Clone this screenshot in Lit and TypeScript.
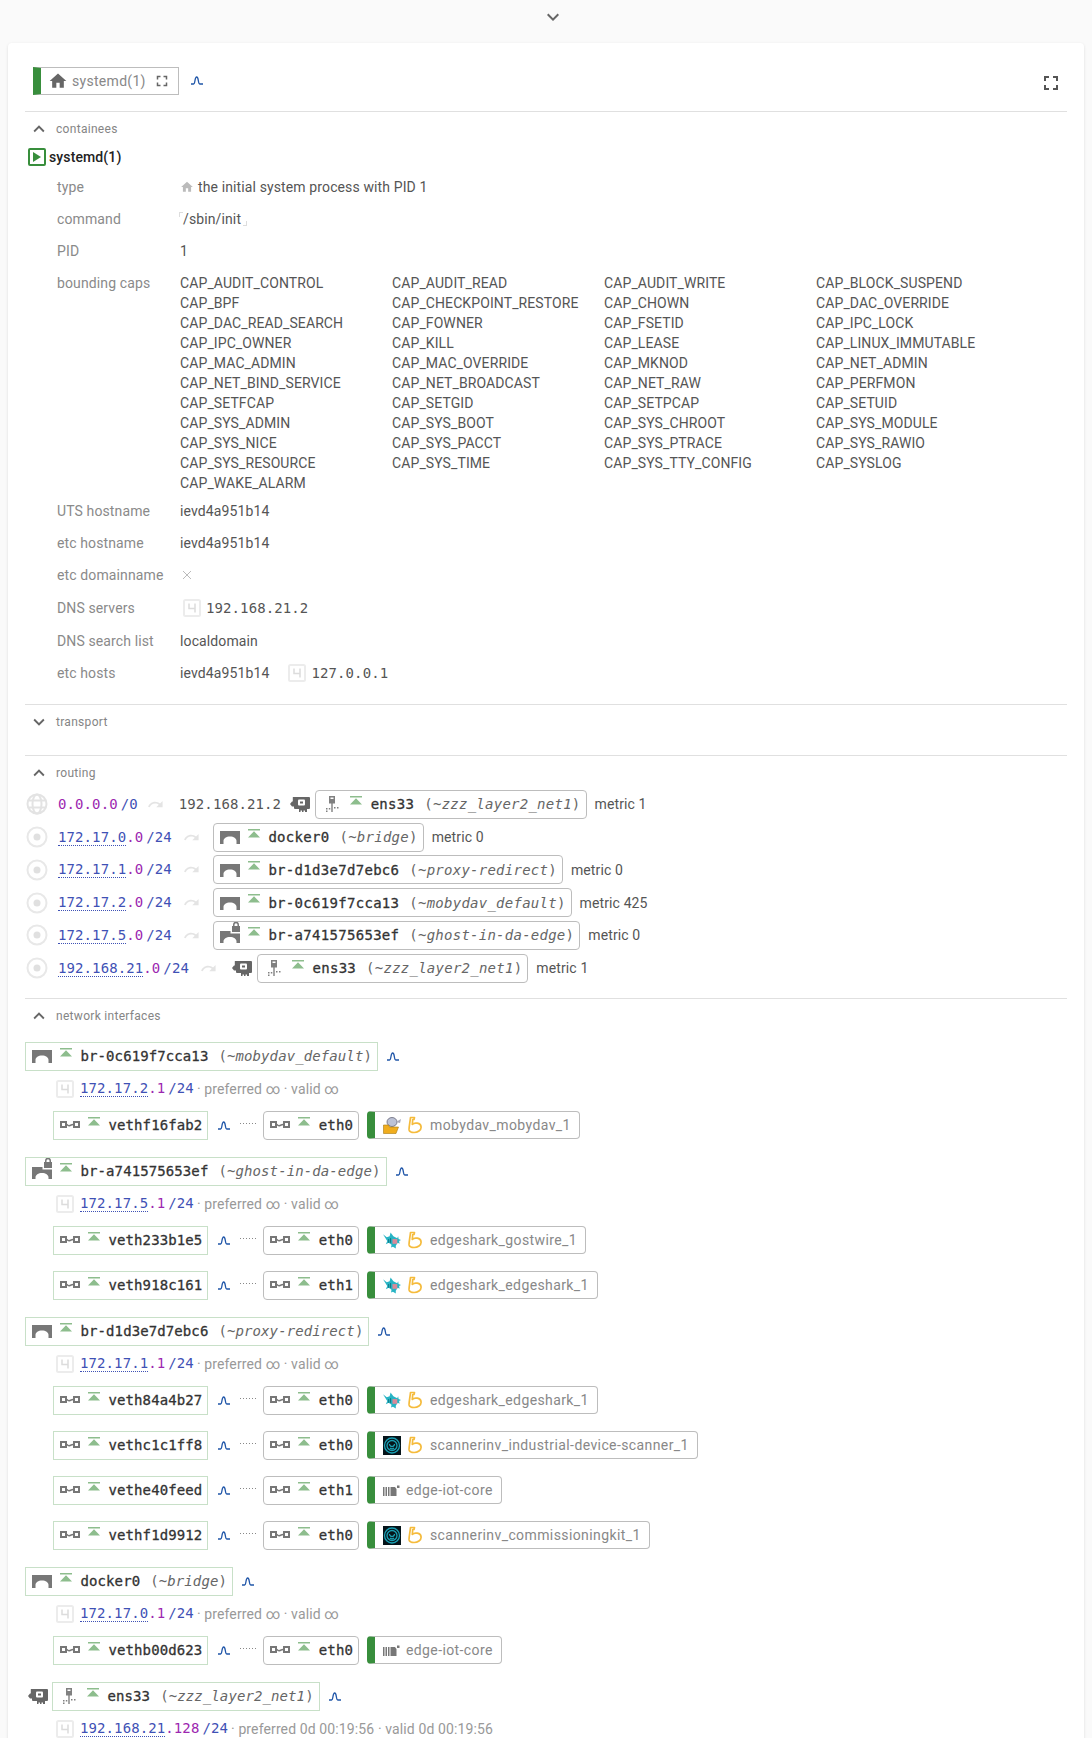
import { LitElement, html, css, TemplateResult } from "lit";
import { customElement } from "lit/decorators.js";

const mi = (d: string, size: number, cls = "") =>
  html`<svg class=${cls} width=${size} height=${size} viewBox="0 0 24 24"><path fill="currentColor" d=${d}></path></svg>`;
const HOME = "M10 20v-6h4v6h5v-8h3L12 3 2 12h3v8z";
const FULL = "M7 14H5v5h5v-2H7v-3zm-2-4h2V7h3V5H5v5zm12 7h-3v2h5v-5h-2v3zM14 5v2h3v3h2V5h-5z";
const UP = "M12 8l-6 6 1.41 1.41L12 10.83l4.59 4.58L18 14z";
const DOWN = "M16.59 8.59L12 13.17 7.41 8.59 6 10l6 6 6-6z";
const REDO = "M18.4 10.6C16.55 8.99 14.15 8 11.5 8c-4.65 0-8.58 3.03-9.96 7.22L3.9 16c1.05-3.19 4.05-5.5 7.6-5.5 1.95 0 3.73.72 5.12 1.88L13 16h9V7l-3.6 3.6z";

const wave = () => html`<svg class="wave" width="12" height="9" viewBox="0 0 12 9"><path d="M0 8h2.600c.8 0 1-1 1.300-3 .3-2 .6-4 1.800-4s1.400 2 1.700 4c.3 2 .5 3 1.300 3H12" fill="none" stroke="#1f55a8" stroke-width="1.300"></path></svg>`;
const upIcon = () => html`<svg class="upi" width="12" height="9" viewBox="0 0 12 9"><path fill="#8dbd8d" d="M0 0h12v1.600H0zM6 2.200l6 6.300H0z"></path></svg>`;
const bridge = () => html`<svg class="ic" width="20" height="14" viewBox="0 0 20 14"><path fill="#777" d="M0 1h20v13h-3.500v-3c0-2.500-2.800-4.500-6.500-4.500S3.500 8.500 3.500 11v3H0z"></path></svg>`;
const lockBridge = () => html`<svg class="ic lock" width="20" height="21" viewBox="0 0 20 21"><path fill="#777" d="M0 9h10.500v2.500H20V21h-3.500v-1.500c0-2.500-2.800-4.500-6.500-4.500s-6.500 2-6.500 4.500V21H0z"></path><path fill="#777" d="M13 4v-1.300a3 3 0 0 1 6 0V4h1v6h-8V4zm1.500 0h3v-1.300a1.500 1.500 0 0 0-3 0z"></path></svg>`;
const vethIcon = () => html`<svg class="ic" width="20" height="8" viewBox="0 0 20 8"><g fill="none" stroke="#777" stroke-width="2"><rect x="1" y="1" width="5" height="5"></rect><rect x="14" y="1" width="5" height="5"></rect><path stroke-width="1.400" d="M6.500 3.500c1.500 0 1.500 2 3.500 1s2-1 3.500-1"></path></g></svg>`;
const ethIcon = () => html`<svg class="ic" width="20" height="16" viewBox="0 0 20 16"><g fill="#808080"><path d="M7 0h6v7.500h-2.300V16H9.300V7.500H7zm1.500 1.500v1.500h3V1.500z"></path><rect x="4" y="12" width="1.500" height="1.500"></rect><rect x="6.800" y="12" width="1.500" height="1.500"></rect><rect x="4" y="14.500" width="1.500" height="1.500"></rect><rect x="12" y="11" width="1.500" height="1.500"></rect><rect x="15" y="11" width="1.500" height="1.500"></rect></g></svg>`;
const nicIcon = () => html`<svg class="nic" width="20" height="16" viewBox="0 0 20 16"><path fill="#666" d="M3 1h16a1 1 0 0 1 1 1v10a1 1 0 0 1-1 1h-2v3h-2v-1.500h-1.500V16H12v-1.500h-1.500V16H9v-3H5a1 1 0 0 1-1-1v-1.500H2l-2-2.500 2-2.500h0.800V2a1 1 0 0 1 .2-1z"></path><rect x="8" y="3.500" width="7" height="6" rx="1" fill="#fff"></rect><rect x="10" y="5.500" width="3" height="2" fill="#666"></rect></svg>`;
const four = () => html`<svg class="four" width="18" height="18" viewBox="0 0 18 18"><rect x="1" y="1" width="16" height="16" rx="1.500" fill="none" stroke="#ececec" stroke-width="2"></rect><path d="M6 4.500v5h6M12 4.500v9" fill="none" stroke="#dcdcdc" stroke-width="1.500"></path></svg>`;
const globe = () => html`<svg class="rt" width="22" height="22" viewBox="0 0 22 22"><g fill="none" stroke="#e3e3e3" stroke-width="2"><circle cx="11" cy="11" r="9.500"></circle><ellipse cx="11" cy="11" rx="4.500" ry="9.500"></ellipse><path d="M2 7.500h18M2 14.500h18"></path></g></svg>`;
const target = () => html`<svg class="rt" width="22" height="22" viewBox="0 0 22 22"><circle cx="11" cy="11" r="9.500" fill="none" stroke="#e8e8e8" stroke-width="2"></circle><circle cx="11" cy="11" r="3.500" fill="#e0e0e0"></circle></svg>`;
const arrow = (cls = "arrow") => mi(REDO, 17, cls);

const muscle = () => html`<svg class="mus" width="15" height="18" viewBox="0 0 15 18"><path d="M2.500 1.500h4l-.5 2H4.700l-.4 5c2-2.300 8.500-2 8.800 2.500.2 3.500-3.500 5.500-7 5.500-2.500 0-4.500-.5-5-2.500-.4-2 1-8 1.400-12.500z" fill="none" stroke="#f5bb3c" stroke-width="1.700" stroke-linejoin="round"></path></svg>`;
const shark = () => html`<svg class="cic" width="18" height="17" viewBox="0 0 19 17"><path fill="#27b4c4" d="M0 2l4 3 3-1 1-4 3 4 4 2 1-2 .5 3 2.500 1-2 1 .5 3-2-1-2 3v3l-3-2-2 1 .5-3-3-2-3 1.500 1.500-3.500z"></path><rect x="10" y="7" width="5" height="5" fill="#d88a9a"></rect><path d="M6 7v4M8 6v5" stroke="#0e6f7c" stroke-width="1"></path></svg>`;
const moby = () => html`<svg class="cic" width="18" height="17" viewBox="0 0 18 17"><ellipse cx="9" cy="5" rx="5" ry="4.500" fill="#bcc2d6" stroke="#667" stroke-width=".8"></ellipse><path d="M13 5l5-3-1 4z" fill="#aab"></path><path fill="#f0ad1e" stroke="#a87a10" stroke-width=".6" d="M.5 8h5l1 2h9l-2.500 6.500H.5z"></path></svg>`;
const scanner = () => html`<svg class="cic scan" width="18" height="19" viewBox="0 0 18 19"><rect width="18" height="19" fill="#06141a"></rect><g fill="none" stroke="#1aa0b4" stroke-width="1.300"><circle cx="9" cy="9.500" r="7.500"></circle><circle cx="9" cy="9.500" r="5"></circle><path d="M6.500 8a2.500 2.500 0 1 0 5 0M7 12a3 3 0 0 0 4 0"></path></g></svg>`;
const edge = () => html`<svg class="cic edge" width="17" height="13" viewBox="0 0 17 13"><path fill="#777" d="M0 3h1.500v9H0zM2.500 3h1.500v9H2.500zM5 3h1.500v9H5zM7.500 3H12l1.500 2v7h-6zM14 1.500h2.500V4H14z"></path></svg>`;

const ipPart = (net: string, host: string, pre: string) => html`<span class="ip">${net ? html`<span class="net">${net}</span>` : ""}<span class="host">${host}</span><span class="pre">/${pre}</span></span>`;

const chip = (kind: "br" | "lock" | "veth" | "eth", name: string, alias = "", cls = "rnd") => html`
  <span class="chip ${cls}">
    <span class="icw">${kind === "br" ? bridge() : kind === "lock" ? lockBridge() : kind === "veth" ? vethIcon() : ethIcon()}</span>
    ${upIcon()}
    <span class="name">${name}</span>
    ${alias ? html`<span class="alias">(~<i>${alias}</i>)</span>` : ""}
  </span>`;

const container = (name: string, kind: string) => html`
  <span class="ctr">
    ${kind === "shark" ? shark() : kind === "moby" ? moby() : kind === "scan" ? scanner() : edge()}
    ${kind === "edge" ? "" : muscle()}
    <span class="ctxt">${name}</span>
  </span>`;

const CAPS = ["CAP_AUDIT_CONTROL","CAP_AUDIT_READ","CAP_AUDIT_WRITE","CAP_BLOCK_SUSPEND","CAP_BPF","CAP_CHECKPOINT_RESTORE","CAP_CHOWN","CAP_DAC_OVERRIDE","CAP_DAC_READ_SEARCH","CAP_FOWNER","CAP_FSETID","CAP_IPC_LOCK","CAP_IPC_OWNER","CAP_KILL","CAP_LEASE","CAP_LINUX_IMMUTABLE","CAP_MAC_ADMIN","CAP_MAC_OVERRIDE","CAP_MKNOD","CAP_NET_ADMIN","CAP_NET_BIND_SERVICE","CAP_NET_BROADCAST","CAP_NET_RAW","CAP_PERFMON","CAP_SETFCAP","CAP_SETGID","CAP_SETPCAP","CAP_SETUID","CAP_SYS_ADMIN","CAP_SYS_BOOT","CAP_SYS_CHROOT","CAP_SYS_MODULE","CAP_SYS_NICE","CAP_SYS_PACCT","CAP_SYS_PTRACE","CAP_SYS_RAWIO","CAP_SYS_RESOURCE","CAP_SYS_TIME","CAP_SYS_TTY_CONFIG","CAP_SYSLOG","CAP_WAKE_ALARM"];

type Peer = [string, string, string, string];
interface Iface { kind: "br" | "lock" | "eth"; name: string; alias: string; ip: [string, string, string]; life: string; peers: Peer[]; }
const IFACES: Iface[] = [
  { kind: "br", name: "br-0c619f7cca13", alias: "mobydav_default", ip: ["172.17.2", ".1", "24"], life: "preferred ∞ · valid ∞", peers: [["vethf16fab2", "eth0", "mobydav_mobydav_1", "moby"]] },
  { kind: "lock", name: "br-a741575653ef", alias: "ghost-in-da-edge", ip: ["172.17.5", ".1", "24"], life: "preferred ∞ · valid ∞", peers: [["veth233b1e5", "eth0", "edgeshark_gostwire_1", "shark"], ["veth918c161", "eth1", "edgeshark_edgeshark_1", "shark"]] },
  { kind: "br", name: "br-d1d3e7d7ebc6", alias: "proxy-redirect", ip: ["172.17.1", ".1", "24"], life: "preferred ∞ · valid ∞", peers: [["veth84a4b27", "eth0", "edgeshark_edgeshark_1", "shark"], ["vethc1c1ff8", "eth0", "scannerinv_industrial-device-scanner_1", "scan"], ["vethe40feed", "eth1", "edge-iot-core", "edge"], ["vethf1d9912", "eth0", "scannerinv_commissioningkit_1", "scan"]] },
  { kind: "br", name: "docker0", alias: "bridge", ip: ["172.17.0", ".1", "24"], life: "preferred ∞ · valid ∞", peers: [["vethb00d623", "eth0", "edge-iot-core", "edge"]] },
  { kind: "eth", name: "ens33", alias: "zzz_layer2_net1", ip: ["192.168.21", ".128", "24"], life: "preferred 0d 00:19:56 · valid 0d 00:19:56", peers: [] },
];

const ROUTES: [string, string, string, "br" | "lock" | "eth", string, string, string][] = [
  ["172.17.0", ".0", "24", "br", "docker0", "bridge", "metric 0"],
  ["172.17.1", ".0", "24", "br", "br-d1d3e7d7ebc6", "proxy-redirect", "metric 0"],
  ["172.17.2", ".0", "24", "br", "br-0c619f7cca13", "mobydav_default", "metric 425"],
  ["172.17.5", ".0", "24", "lock", "br-a741575653ef", "ghost-in-da-edge", "metric 0"],
  ["192.168.21", ".0", "24", "eth", "ens33", "zzz_layer2_net1", "metric 1"],
];

@customElement("app-root")
export class AppRoot extends LitElement {
  static styles = css`
    :host { display: block; height: 1738px; overflow: hidden; background: #fafafa; font-family: Roboto, sans-serif; font-size: 14px; letter-spacing: .12px; color: rgba(0,0,0,.8); }
    svg { flex: none; display: block; }
    .top { height: 43px; display: flex; justify-content: center; color: #666; padding: 5px 0 0 14px; box-sizing: border-box; }
    .card { margin: 0 8px; padding: 24px 17px 40px; background: #fff; border-radius: 4px; box-shadow: 0 1px 3px rgba(0,0,0,.12); min-height: 1700px; box-sizing: border-box; }
    .title { display: flex; align-items: center; height: 28px; margin-bottom: 16px; padding-left: 8px; color: #555; position: relative; }
    .pill { display: inline-flex; align-items: center; height: 28px; box-sizing: border-box; border: 1px solid #bdbdbd; border-left: 8px solid #388e3c; padding: 0 0 0 7px; color: #888; gap: 4px; width: 146px; letter-spacing: .3px; }
    .pill .home { color: #666; }
    .pill .fs { color: #666; margin-left: 3px; }
    .title .wave { margin-left: 12px; margin-top: -1px; }
    .title .big { position: absolute; right: 4px; top: 4px; color: #555; }
    .section { border-top: 1px solid #e0e0e0; }
    .head { display: flex; align-items: center; height: 32px; box-sizing: border-box; padding: 2px 0 0 3px; font-size: 12px; letter-spacing: .3px; color: #858585; gap: 6px; }
    .head svg { color: #666; }
    .sys { display: flex; align-items: center; height: 27px; box-sizing: border-box; padding: 0 0 2px 3px; font-weight: 500; color: #222; gap: 3px; }
    .play { width: 18px; height: 18px; box-sizing: border-box; border: 2px solid #388e3c; border-radius: 2px; display: flex; align-items: center; justify-content: center; }
    .rows { padding-left: 32px; margin-bottom: 15px; }
    .row { display: grid; grid-template-columns: 123px 1fr; height: 32px; align-items: center; }
    .row.tall { height: 33px; }
    .row.caps { height: 228px; align-items: start; padding-top: 6px; box-sizing: border-box; line-height: 20px; }
    .lbl { color: #8a8a8a; }
    .val { display: flex; align-items: center; color: #555; }
    .sp { width: 16px; }
    .capgrid { display: grid; grid-template-columns: repeat(4, 212px); font-size: 14px; letter-spacing: .1px; color: #555; }
    .mono, .ip, .name, .alias { font-family: "DejaVu Sans Mono", monospace; font-size: 14px; letter-spacing: .1px; }
    .dim { color: #bbb; margin-right: 4px; }
    .q1, .q2 { width: 3px; height: 4px; align-self: flex-start; border: 0 solid #ddd; }
    .q1 { border-width: 1px 0 0 1px; margin: 1px 0 0 -1px; }
    .q2 { border-width: 0 1px 1px 0; align-self: flex-end; margin-bottom: 1px; margin-left: 2px; }
    .four { margin: 0 6px 0 3px; }
    .val .four { margin-right: 5px; }
    .transport { margin-bottom: 18px; }
    .routes { margin-bottom: 13.500px; }
    .routes .name { letter-spacing: .3px; }
    .routes .alias { letter-spacing: .25px; }
    .route { display: flex; align-items: center; height: 32.750px; white-space: nowrap; }
    .rt { margin: 0 10px 0 1px; }
    .ip { display: inline-flex; }
    .net { color: #3f51b5; border-bottom: 1px dotted #3f51b5; line-height: 16px; }
    .host { color: #9c27b0; }
    .pre { color: #3f51b5; margin-left: 3px; }
    .arrow { color: #e4e4e4; margin: 0 13px 0 11px; }
    .a1 { color: #e4e4e4; margin: 0 15px 0 9px; }
    .gw { color: #555; margin-right: 9px; }
    .nic { margin: 0 5px 0 0; }
    .arrow + .nic { margin-left: 2px; }
    .chip { display: inline-flex; align-items: center; height: 29px; box-sizing: border-box; border: 1px solid #bdbdbd; padding: 0 5px 0 6px; white-space: nowrap; background: #fff; flex: none; }
    .chip.rnd { border-radius: 4px; }
    .chip.sq { border-color: #c8e0c8; }
    .icw { width: 20px; display: flex; justify-content: flex-end; }
    .chip .lock { margin-top: -5px; }
    .upi { margin: -8px 0 0 8px; }
    .name { margin-left: 8.500px; color: #333; -webkit-text-stroke: .3px #333; }
    .alias { margin-left: 10px; color: #666; }
    .metric { margin-left: 8px; color: #555; }
    .ifaces { padding-top: 10.500px; }
    .iface { margin-bottom: 17px; }
    .ifhead { display: flex; align-items: center; height: 29px; }
    .ifhead > .wave { margin-left: 9px; }
    .ifhead .ext { margin: 0 4px 0 3px; }
    .ifhead .nic { margin: 0; }
    .addr { display: flex; align-items: center; height: 36px; padding: 0 0 4px 28px; white-space: nowrap; }
    .life { color: #999; margin-left: 3px; }
    .peers { display: flex; flex-direction: column; gap: 16px; padding-left: 28px; }
    .peer { display: flex; align-items: center; height: 29px; }
    .peer > .wave { margin: 0 10px; }
    .dots { width: 18px; height: 1px; margin: -4px 5px 0 0; background: repeating-linear-gradient(90deg, #888 0 1px, transparent 1px 3px); }
    .ctr { display: inline-flex; align-items: center; height: 28px; box-sizing: border-box; margin-left: 8px; border: 1px solid #bdbdbd; border-left: 8px solid #388e3c; border-radius: 4px; padding: 0 8px; white-space: nowrap; }
    .mus { margin-left: 7px; }
    .ctxt { margin-left: 7px; color: #888; letter-spacing: .4px; }
    .edge + .ctxt { margin-left: 6px; }
  `;

  section(label: string, open: boolean, body: TemplateResult | string = "", cls = "") {
    return html`<div class="section ${cls}"><div class="head">${mi(open ? UP : DOWN, 22)}<span>${label}</span></div>${body}</div>`;
  }

  renderRoutes() {
    return html`<div class="routes">
      <div class="route">${globe()}<span class="ip"><span class="host">0.0.0.0</span><span class="pre">/0</span></span>${arrow("a1")}<span class="mono gw">192.168.21.2</span>${nicIcon()}${chip("eth", "ens33", "zzz_layer2_net1")}<span class="metric">metric 1</span></div>
      ${ROUTES.map(r => html`<div class="route">${target()}${ipPart(r[0], r[1], r[2])}${arrow()}${r[3] === "eth" ? nicIcon() : ""}${chip(r[3], r[4], r[5])}<span class="metric">${r[6]}</span></div>`)}
    </div>`;
  }

  renderIfaces() {
    return html`<div class="ifaces">${IFACES.map(f => html`<div class="iface">
      <div class="ifhead">${f.kind === "eth" ? html`<span class="ext">${nicIcon()}</span>` : ""}${chip(f.kind, f.name, f.alias, "sq")}${wave()}</div>
      <div class="addr">${four()}${ipPart(f.ip[0], f.ip[1], f.ip[2])}<span class="life">· ${f.life}</span></div>
      <div class="peers">${f.peers.map(p => html`<div class="peer">${chip("veth", p[0], "", "sq")}${wave()}<span class="dots"></span>${chip("veth", p[1])}${container(p[2], p[3])}</div>`)}</div>
    </div>`)}</div>`;
  }

  render() {
    return html`
      <div class="top">${mi(DOWN, 24)}</div>
      <div class="card">
        <div class="title">
          <span class="pill">${mi(HOME, 20, "home")}<span>systemd(1)</span>${mi(FULL, 18, "fs")}</span>
          ${wave()}
          ${mi(FULL, 24, "big")}
        </div>
        ${this.section("containees", true, html`
          <div class="sys"><span class="play"><svg width="8" height="10" viewBox="0 0 8 10"><path fill="#388e3c" d="M0 0l8 5-8 5z"></path></svg></span><span>systemd(1)</span></div>
          <div class="rows">
            <div class="row"><span class="lbl">type</span><span class="val">${mi(HOME, 14, "dim")}the initial system process with PID 1</span></div>
            <div class="row"><span class="lbl">command</span><span class="val"><span class="q1"></span>/sbin/init<span class="q2"></span></span></div>
            <div class="row"><span class="lbl">PID</span><span class="val">1</span></div>
            <div class="row caps"><span class="lbl">bounding caps</span><div class="capgrid">${CAPS.map(c => html`<span>${c}</span>`)}</div></div>
            <div class="row"><span class="lbl">UTS hostname</span><span class="val">ievd4a951b14</span></div>
            <div class="row"><span class="lbl">etc hostname</span><span class="val">ievd4a951b14</span></div>
            <div class="row"><span class="lbl">etc domainname</span><span class="val"><svg width="14" height="14" viewBox="0 0 14 14"><path d="M3 3l8 8M11 3l-8 8" stroke="#bbb" stroke-width="1"></path></svg></span></div>
            <div class="row tall"><span class="lbl">DNS servers</span><span class="val">${four()}<span class="mono">192.168.21.2</span></span></div>
            <div class="row tall"><span class="lbl">DNS search list</span><span class="val">localdomain</span></div>
            <div class="row"><span class="lbl">etc hosts</span><span class="val">ievd4a951b14<span class="sp"></span>${four()}<span class="mono">127.0.0.1</span></span></div>
          </div>`)}
        ${this.section("transport", false, "", "transport")}
        ${this.section("routing", true, this.renderRoutes())}
        ${this.section("network interfaces", true, this.renderIfaces())}
      </div>`;
  }
}
